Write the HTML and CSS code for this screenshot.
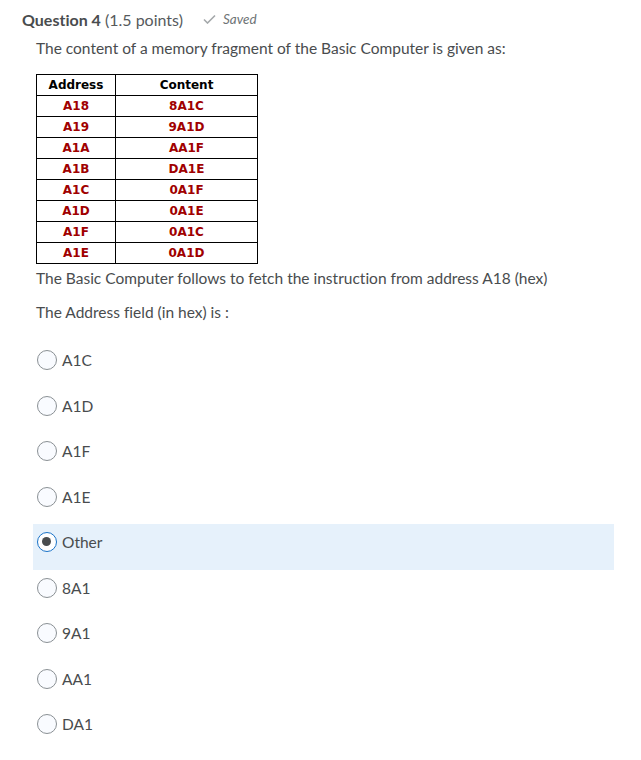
FILE: index.html
```html
<!DOCTYPE html>
<html lang="en">
<head>
  <meta charset="UTF-8">
  <title>Question 4</title>
  <link rel="stylesheet" href="styles.css">
</head>
<body>

  <!-- QUESTION HEADER -->
  <div class="q-header">
    <h2 class="q-title"><strong>Question 4</strong> (1.5 points)</h2>
    <span class="saved">
      <svg width="13" height="10" viewBox="0 0 13 10"><path d="M1 5.5 L4.5 9 L12 1.5" fill="none" stroke="#a4a8aa" stroke-width="1.6"/></svg>
      Saved
    </span>
  </div>

  <!-- QUESTION BODY -->
  <div class="q-body">
    <p class="q-text">The content of a memory fragment of the Basic Computer is given as:</p>

    <table class="mem">
      <tr><th>Address</th><th>Content</th></tr>
      <tr><td>A18</td><td>8A1C</td></tr>
      <tr><td>A19</td><td>9A1D</td></tr>
      <tr><td>A1A</td><td>AA1F</td></tr>
      <tr><td>A1B</td><td>DA1E</td></tr>
      <tr><td>A1C</td><td>0A1F</td></tr>
      <tr><td>A1D</td><td>0A1E</td></tr>
      <tr><td>A1F</td><td>0A1C</td></tr>
      <tr><td>A1E</td><td>0A1D</td></tr>
    </table>

    <p class="q-line">The Basic Computer follows to fetch the instruction from address A18 (hex)</p>
    <p class="q-line">The Address field (in hex) is :</p>
  </div>

  <!-- ANSWER OPTIONS -->
  <div class="options">
    <label class="option"><span class="radio"></span>A1C</label>
    <label class="option"><span class="radio"></span>A1D</label>
    <label class="option"><span class="radio"></span>A1F</label>
    <label class="option"><span class="radio"></span>A1E</label>
    <label class="option selected"><span class="radio"></span>Other</label>
    <label class="option"><span class="radio"></span>8A1</label>
    <label class="option"><span class="radio"></span>9A1</label>
    <label class="option"><span class="radio"></span>AA1</label>
    <label class="option"><span class="radio"></span>DA1</label>
  </div>

</body>
</html>
```

FILE: styles.css
```css
* {
  box-sizing: border-box;
}

body {
  margin: 0;
  font-family: Lato, 'Open Sans', sans-serif;
  font-variant-ligatures: none;
  color: #494c4e;
  background: #fff;
}

/* HEADER */
.q-header {
  display: flex;
  align-items: center;
  height: 38px;
  padding: 0 0 0 22px;
}

.q-title {
  margin: 0;
  font-size: 16px;
  font-weight: normal;
  color: #565a5c;
}

.q-title strong {
  font-weight: bold;
  color: #494c4e;
}

.saved {
  display: flex;
  align-items: center;
  gap: 7px;
  margin-left: 20px;
  margin-top: -1px;
  font-size: 13.5px;
  font-style: italic;
  color: #6e7376;
}

/* BODY */
.q-body {
  padding-left: 36px;
}

.q-text {
  margin: 0;
  height: 36px;
  line-height: 20px;
  font-size: 15.5px;
}

.mem {
  border-collapse: collapse;
  font-family: 'DejaVu Sans', Verdana, sans-serif;
  font-size: 12px;
  font-weight: bold;
}

.mem th,
.mem td {
  border: 1.5px solid #000;
  height: 21px;
  padding: 0;
  text-align: center;
}

.mem th {
  color: #000;
}

.mem td {
  color: #a00000;
}

.mem th:first-child {
  width: 79px;
}

.mem th:last-child {
  width: 142px;
}

.q-line {
  margin: 4px 0 14px;
  line-height: 20px;
  font-size: 15.5px;
}

/* OPTIONS */
.options {
  margin-top: 20px;
  padding-left: 33px;
  width: 614px;
}

.option {
  display: flex;
  align-items: flex-start;
  gap: 5px;
  height: 45.5px;
  padding: 8px 0 0 4px;
  font-size: 15.5px;
  line-height: 20px;
}

.option.selected {
  background: #e6f1fb;
}

.radio {
  width: 20px;
  height: 20px;
  border: 1.5px solid #8a9094;
  border-radius: 50%;
  background: #f9fbff;
  position: relative;
}

.selected .radio {
  border-color: #1a73c8;
  background: #fff;
}

.selected .radio::after {
  content: "";
  position: absolute;
  left: 4px;
  top: 4px;
  width: 9px;
  height: 9px;
  border-radius: 50%;
  background: #494c4e;
}
```
